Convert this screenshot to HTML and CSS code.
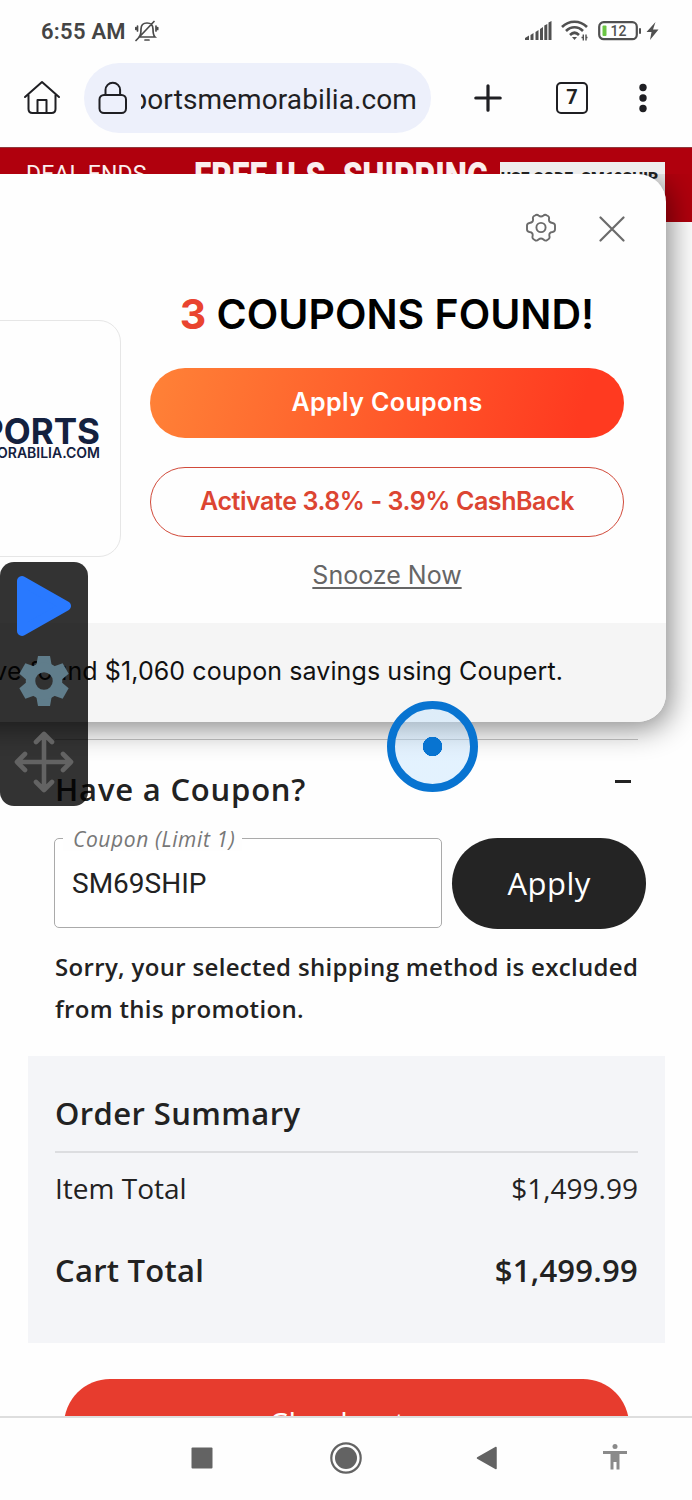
FILE: index.html
```html
<!DOCTYPE html>
<html lang="en">
<head>
<meta charset="utf-8">
<meta name="viewport" content="width=device-width">
<title>Cart</title>
<link rel="stylesheet" href="styles.css">
</head>
<body>
<div class="phone">
  <header class="status">
    <span class="clock">6:55 AM</span>
    <svg class="bell" width="24" height="22" viewBox="0 0 24 22" fill="none" stroke="#4a4a4a" stroke-width="1.7" stroke-linecap="round">
      <path d="M5 17h15c-2-2-2-4-2-8 0-4-2-6-6-6s-6 2-6 6c0 4 0 6-2 8M10 20h4M2.500 6v5M.8 7.500v2M21 6v5M22.700 7.500v2M1 20.500L19 1.500"/>
    </svg>
    <svg class="signal" width="27" height="20" viewBox="0 0 27 20" fill="#505050">
      <path d="M0 17l4-2.500V19H0zM5.500 14l3-2v7h-3zM10.500 11l3-2v10h-3zM15 8l3-2v13h-3zM19.300 4.500l3-1.500v16h-3zM23.500 1.500l3-1.500v19h-3z"/>
    </svg>
    <svg class="wifi" width="28" height="22" viewBox="0 0 28 22" fill="none" stroke="#505050" stroke-width="2.600">
      <path d="M1 7c7-7 18-7 25 0M5 11c5-5 12-5 17 0M9 15c3-3 6-3 9 0"/>
      <path d="M11 17h5l-2.500 3z" fill="#505050" stroke="none"/>
      <path d="M22.300 14.500v6M25 14.500v6M20.500 17.500h1.500M25 17.500h1.500" stroke-width="1.400"/>
    </svg>
    <svg class="battery" width="44" height="20" viewBox="0 0 44 20" fill="none">
      <rect x="1.200" y="1.200" width="37.600" height="17" rx="4.500" stroke="#505050" stroke-width="2.200"/>
      <rect x="4.500" y="4.500" width="4" height="10.500" rx="1" fill="#6cc644"/>
      <rect x="41" y="7" width="2" height="6" rx="1" fill="#505050"/>
      <text x="12.500" y="15" class="battery-text">12</text>
    </svg>
    <svg class="bolt" width="13" height="18" viewBox="0 0 13 18" fill="#505050"><path d="M9.500 0L.5 10h5L4 18 12.500 7.500H7z"/></svg>
  </header>

  <nav class="toolbar">
    <svg class="home" width="38" height="36" viewBox="0 0 38 36" fill="none" stroke="#1f1f23" stroke-width="2" stroke-linecap="round" stroke-linejoin="round">
      <path d="M2 17L19 2l17 15M5.500 15v14q0 4 4 4h19q4 0 4-4V15M14.500 33V20h9v13"/>
    </svg>
    <div class="address">
      <svg width="30" height="34" viewBox="0 0 30 34" fill="none" stroke="#1f1f23" stroke-width="2">
        <rect x="1.500" y="14" width="26.500" height="18" rx="4.500"/><path d="M7.500 14V9a7.300 7.300 0 0 1 14.600 0v5"/>
      </svg>
      <div class="url"><span>sportsmemorabilia.com</span></div>
    </div>
    <svg class="plus" width="28" height="28" viewBox="0 0 28 28" stroke="#1f1f23" stroke-width="3.200" stroke-linecap="round"><path d="M1.800 14h24.400M14 1.800v24.400"/></svg>
    <div class="tabs">7</div>
    <svg class="more" width="8" height="30" viewBox="0 0 8 30" fill="#1f1f23"><circle cx="4" cy="4.500" r="3.700"/><circle cx="4" cy="15" r="3.700"/><circle cx="4" cy="25.500" r="3.700"/></svg>
  </nav>

  <main class="page">
    <div class="banner">
      <div class="deal">DEAL ENDS</div>
      <div class="ship">FREE U.S. SHIPPING</div>
      <div class="code">USE CODE: SM69SHIP</div>
    </div>
    <section class="coupon">
      <div class="coupon-head"><h2>Have a Coupon?</h2><span class="minus"></span></div>
      <div class="coupon-form">
        <div class="field"><span class="label">Coupon (Limit 1)</span><span class="value">SM69SHIP</span></div>
        <div class="apply">Apply</div>
      </div>
      <p class="error">Sorry, your selected shipping method is excluded<br>from this promotion.</p>
    </section>
    <section class="summary">
      <h2>Order Summary</h2>
      <div class="row"><span>Item Total</span><span>$1,499.99</span></div>
      <div class="row total"><span>Cart Total</span><span>$1,499.99</span></div>
    </section>
    <div class="checkout">Checkout ›</div>
  </main>

  <footer class="system">
    <svg width="22" height="22" viewBox="0 0 22 22"><rect x=".5" y=".5" width="21" height="21" rx="1" fill="#636363"/></svg>
    <svg width="32" height="32" viewBox="0 0 32 32"><circle cx="16" cy="16" r="14.700" fill="none" stroke="#636363" stroke-width="2.200"/><circle cx="16" cy="16" r="11" fill="#636363"/></svg>
    <svg width="22" height="24" viewBox="0 0 22 24"><path d="M20 1.500v21L1.500 12z" fill="#636363" stroke="#636363" stroke-width="1.500" stroke-linejoin="round"/></svg>
    <svg width="24" height="26" viewBox="0 0 24 26" fill="#8a8a8a"><circle cx="12" cy="2.600" r="2.500"/><path d="M0 7h24v3h-7.500v15.500h-3V18h-3v7.500h-3V10H0z"/></svg>
  </footer>

  <aside class="popup">
    <div class="popup-tools">
      <svg width="32" height="30" viewBox="0 0 32 30" fill="none" stroke="#6b6b6b" stroke-width="1.900" stroke-linejoin="round">
        <path d="M10 2.500Q12 1 13.500 2.500Q16 4.500 18.500 2.500Q20 1 22 2.500L23 3Q24.500 4 24 6Q23.500 9.500 27.500 10Q30 10.500 30 12.500V16.500Q30 18.500 27.500 19Q23.500 19.500 24.500 23.500Q25 25.500 23 26.500L21.500 27.500Q20 28 18.500 26.500Q16 24.500 13.500 26.500Q12 28 10.500 27.500L9 26.500Q7 25.500 7.500 23.500Q8.500 19.500 4.500 19Q2 18.500 2 16.500V12.500Q2 10.500 4.500 10Q8.500 9.500 8 6Q7.500 4 9 3Z"/>
        <circle cx="16" cy="14.500" r="4.600"/>
      </svg>
      <svg width="26" height="26" viewBox="0 0 26 26" stroke="#6b6b6b" stroke-width="2.200" stroke-linecap="round"><path d="M1.500 1.500l23 23M24.500 1.500l-23 23"/></svg>
    </div>
    <div class="popup-body">
      <div class="store"><span class="store-name">SPORTS</span><span class="store-sub">MEMORABILIA.COM</span></div>
      <div class="offer">
        <h1><span><b>3</b> COUPONS FOUND!</span></h1>
        <div class="btn primary"><span>Apply Coupons</span></div>
        <div class="btn outline"><span>Activate 3.8% - 3.9% CashBack</span></div>
        <div class="snooze"><span>Snooze Now</span></div>
      </div>
    </div>
    <div class="popup-foot"><span>We have found $1,060 coupon savings using Coupert.</span></div>
  </aside>

  <aside class="widget">
    <svg width="56" height="62" viewBox="0 0 56 62"><path d="M6 6v50l44-25z" fill="#2979ff" stroke="#2979ff" stroke-width="10" stroke-linejoin="round"/></svg>
    <svg width="50" height="52" viewBox="-25 -26 50 52">
      <g fill="#607d8b">
        <path id="tooth" d="M-8-14L-6-25H6L8-14z"/>
        <use href="#tooth" transform="rotate(60)"/><use href="#tooth" transform="rotate(120)"/><use href="#tooth" transform="rotate(180)"/><use href="#tooth" transform="rotate(240)"/><use href="#tooth" transform="rotate(300)"/>
      </g>
      <circle r="13.500" fill="none" stroke="#607d8b" stroke-width="9.500"/>
    </svg>
    <svg class="move" width="60" height="62" viewBox="-30 -31 60 62" fill="none" stroke="#636363" stroke-width="4.600" stroke-linecap="round" stroke-linejoin="round"><path d="M0-27V27M-27 0H27M-8-20L0-28L8-20M-8 20L0 28L8 20M-19-8L-27 0L-19 8M19-8L27 0L19 8"/></svg>
  </aside>
  <div class="touch"></div>
</div>
</body>
</html>
```
FILE: styles.css
```css
* { box-sizing: border-box; }
body { margin: 0; background: #fff; }
h1, h2, p { margin: 0; }
svg { display: block; flex: none; }
.phone { position: relative; width: 692px; height: 1500px; overflow: hidden; display: flex; flex-direction: column; background: #fefefe; font-family: "Open Sans", sans-serif; color: #222; }

.status { height: 62px; flex: none; display: flex; align-items: center; padding: 0 33px 0 41px; font-family: Roboto, sans-serif; }
.clock { font-size: 22px; font-weight: 600; letter-spacing: .25px; color: #444; white-space: nowrap; width: 94px; }
.signal { margin-left: auto; }
.wifi { margin-left: 9px; }
.battery { margin-left: 9px; }
.bolt { margin-left: 4px; }
.battery-text { font: 500 14px Roboto, sans-serif; fill: #505050; }

.toolbar { height: 85px; flex: none; display: flex; align-items: center; padding: 0 45px 13px 23px; }
.address { width: 347px; height: 70px; margin-left: 23px; border-radius: 35px; background: #edf0fb; display: flex; align-items: center; padding-left: 14px; }
.url { width: 276px; margin: 3px 0 0 13px; overflow: hidden; display: flex; justify-content: flex-end; font: 28px/40px Roboto, sans-serif; letter-spacing: .1px; color: #1f1f23; white-space: nowrap; }
.plus { margin-left: 43px; }
.tabs { width: 32px; height: 32px; margin-left: 54px; border: 2.500px solid #1f1f23; border-radius: 5px; font: 700 20px/27px Roboto, sans-serif; text-align: center; }
.more { margin-left: auto; }

.page { flex: none; height: 1269px; overflow: hidden; display: flex; flex-direction: column; }
.banner { height: 75px; flex: none; background: #b0000d; border-top: 1px solid #8e3a3e; color: #fbeeee; display: flex; align-items: flex-start; padding-left: 26px; font-family: Roboto, sans-serif; white-space: nowrap; }
.deal { width: 168px; padding-top: 13px; font-size: 23px; line-height: 27px; letter-spacing: .1px; font-weight: 400; }
.ship { width: 306px; padding-top: 7px; font-size: 38px; line-height: 44px; font-weight: 900; transform: scaleX(.83); transform-origin: 0 0; }
.code { width: 165px; height: 60px; margin-top: 14px; background: #eee; color: #222; font-size: 15.500px; font-weight: 900; line-height: 33px; text-align: right; padding-right: 7px; }

.coupon { margin: 517px 54px 0 55px; border-top: 1px solid #c4c4c4; }
.coupon-head { height: 98px; display: flex; justify-content: space-between; align-items: center; padding-right: 7px; }
h2 { font-size: 31px; line-height: 42px; font-weight: 600; letter-spacing: .4px; }
.coupon-head h2 { letter-spacing: .8px; margin-top: -1px; }
.minus { width: 16px; height: 3px; margin-top: -16px; background: #222; }
.coupon-form { display: flex; gap: 10px; margin: 0 -8px 0 -1px; }
.field { position: relative; width: 389px; height: 90px; border: 1px solid #aaa; border-radius: 5px; background: #fff; padding: 0 17px; }
.label { position: absolute; left: 8px; top: -13px; height: 25px; overflow: hidden; padding: 0 7px 0 10px; background: #fefefe; font-size: 21px; line-height: 27px; letter-spacing: .6px; font-style: italic; color: #777; white-space: nowrap; }
.value { font: 28px/90px Roboto, sans-serif; }
.apply { width: 194px; height: 91px; border-radius: 46px; background: #242424; color: #fff; font-size: 31px; line-height: 91px; letter-spacing: .5px; text-align: center; }
.error { margin-top: 17px; font-size: 24px; line-height: 42px; font-weight: 600; letter-spacing: .33px; white-space: nowrap; }
.summary { flex: none; height: 287px; margin: 26px 27px 0 28px; padding: 36px 27px 0 27px; background: #f4f5f8; }
.summary h2 { height: 61px; border-bottom: 2px solid #dcdde0; }
.row { display: flex; justify-content: space-between; padding-top: 15px; font-size: 28px; line-height: 40px; }
.total { padding-top: 42px; font-size: 31px; font-weight: 600; letter-spacing: .25px; }
.checkout { flex: none; height: 92px; margin: 36px 63px 0 64px; border-radius: 46px; background: #e73c2e; color: #fff; font-size: 30px; line-height: 88px; letter-spacing: .7px; text-align: center; }

.system { flex: none; height: 84px; border-top: 2px solid #dedede; display: flex; align-items: center; background: #fefefe; padding: 0 0 2px 191px; }
.system svg:nth-child(2) { margin-left: 117px; }
.system svg:nth-child(3) { margin-left: 114px; }
.system svg:nth-child(4) { margin-left: 105px; margin-top: -2px; }

.popup { position: absolute; left: -140px; top: 174px; width: 806px; height: 548px; border-radius: 28px; background: #fefefe; box-shadow: 4px 6px 30px rgba(0,0,0,.48); display: flex; flex-direction: column; font-family: Inter, sans-serif; clip-path: inset(0 -60px -60px 0); }
.popup-tools { height: 146px; display: flex; justify-content: flex-end; gap: 42px; padding: 39px 41px 0 0; }
.popup-tools svg:last-child { margin-top: 3px; }
.popup-body { height: 303px; display: flex; gap: 29px; padding-left: 24px; white-space: nowrap; }
.store { width: 237px; height: 237px; border: 1px solid #e6e6e6; border-radius: 22px; display: flex; flex-direction: column; justify-content: center; align-items: flex-end; padding-right: 20px; color: #14213f; }
.store-name { font-size: 35px; line-height: 28px; font-weight: 700; }
.store-sub { font-size: 14px; line-height: 15px; font-weight: 600; }
.offer { width: 474px; text-align: center; }
h1 { height: 48px; margin-top: -30px; font-size: 41px; line-height: 48px; font-weight: 600; color: #000; }
h1 b { color: #e9442f; font-weight: 700; }
.btn { height: 70px; border-radius: 36px; font-size: 25px; line-height: 68px; font-weight: 600; }
.primary { margin-top: 30px; background: linear-gradient(105deg, #ff8237, #ff3a20 90%); color: #fff; letter-spacing: .4px; }
.outline { margin-top: 29px; border: 1.500px solid #d14a3a; color: #dc4532; line-height: 66px; letter-spacing: -.42px; }
.snooze { margin-top: 21px; font-size: 25px; line-height: 35px; color: #666; text-decoration: underline; text-underline-offset: 3px; text-decoration-thickness: 2px; }
.popup-foot { height: 99px; background: #f5f5f5; border-radius: 0 0 28px 28px; padding-right: 103px; text-align: right; font-size: 25px; line-height: 97px; letter-spacing: .1px; color: #111; white-space: nowrap; }

.widget { position: absolute; left: 0; top: 562px; width: 88px; height: 244px; border-radius: 14px; background: rgba(0,0,0,.8); display: flex; flex-direction: column; align-items: center; padding-top: 13px; gap: 18px; }
.move { margin-top: 6px; }
.touch { position: absolute; left: 387px; top: 701px; width: 91px; height: 91px; border: 8px solid #0874d1; border-radius: 50%; background: radial-gradient(circle, #0874d1 9.500px, rgba(190,225,255,.42) 10px); }
```
